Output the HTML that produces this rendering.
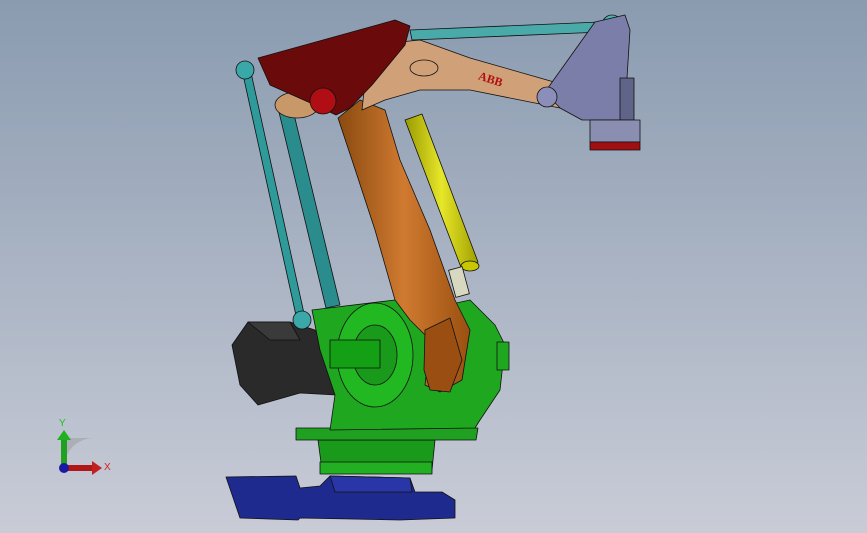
<!DOCTYPE html>
<html><head><meta charset="utf-8"><style>
html,body{margin:0;padding:0;width:867px;height:533px;overflow:hidden}
svg{display:block}
</style></head><body>
<svg width="867" height="533" viewBox="0 0 867 533" xmlns="http://www.w3.org/2000/svg">
<defs>
<linearGradient id="bg" x1="0" y1="0" x2="0" y2="1">
<stop offset="0" stop-color="#8a9bb0"/><stop offset="1" stop-color="#c9ccd7"/></linearGradient>
<linearGradient id="yel" x1="0" y1="0" x2="1" y2="0">
<stop offset="0" stop-color="#9a9a00"/><stop offset="0.5" stop-color="#e6e62a"/><stop offset="1" stop-color="#a0a000"/></linearGradient>
<linearGradient id="org" x1="0" y1="0" x2="1" y2="0">
<stop offset="0" stop-color="#8a4a10"/><stop offset="0.5" stop-color="#d07a30"/><stop offset="1" stop-color="#9a5010"/></linearGradient>
</defs>
<rect width="867" height="533" fill="url(#bg)"/>
<g stroke="#111" stroke-width="0.8" stroke-linejoin="round">
<!-- blue base -->
<polygon points="226,477 296,476 300,488 320,486 330,476 410,478 415,492 442,492 455,500 455,518 400,520 300,518 298,520 240,518" fill="#1e2a8e"/>
<polygon points="330,476 410,478 412,492 335,492" fill="#2a36a8"/>
<!-- green lower drum -->
<polygon points="318,440 435,440 432,470 322,470" fill="#1a9a1a"/>
<rect x="320" y="462" width="112" height="12" fill="#22b022"/>
<polygon points="296,428 478,428 476,440 296,440" fill="#20a020"/>
<!-- black motor -->
<polygon points="248,322 290,322 315,330 335,370 336,395 300,393 258,405 240,385 232,345" fill="#2a2a2a"/>
<polygon points="248,322 290,322 300,340 270,340" fill="#3a3a3a"/>
<!-- green main body -->
<polygon points="312,310 395,300 425,310 470,300 495,325 505,345 500,390 480,420 475,428 330,430 335,395 320,350" fill="#1fa81f"/>
<ellipse cx="375" cy="355" rx="38" ry="52" fill="#22b822"/>
<ellipse cx="375" cy="355" rx="22" ry="30" fill="#1a9a1a"/>
<rect x="330" y="340" width="50" height="28" fill="#14a014"/>
<rect x="497" y="342" width="12" height="28" fill="#1fa81f"/>
<!-- teal rods -->
<polygon points="242,70 250,68 305,318 297,320" fill="#2f9a9a"/>
<polygon points="278,108 292,106 340,305 326,308" fill="#2a8c8c"/>
<circle cx="302" cy="320" r="9" fill="#3aa8a8"/>
<circle cx="245" cy="70" r="9" fill="#3aa8a8"/>
<!-- orange arm -->
<polygon points="338,118 360,100 385,110 400,160 430,230 455,300 470,330 462,380 440,392 425,385 430,340 410,320 395,300 375,230 352,160" fill="url(#org)"/>
<polygon points="425,330 450,318 462,360 450,392 430,390 424,370" fill="#9a4e12"/>
<!-- yellow cylinder -->
<polygon points="405,120 422,114 478,262 462,270" fill="url(#yel)"/>
<ellipse cx="470" cy="266" rx="9" ry="5" fill="#c8c800"/>
<rect x="452" y="268" width="14" height="28" fill="#d8d8c0" transform="rotate(-15 459 282)"/>
<!-- tan upper arm -->
<polygon points="365,82 400,42 420,40 470,58 540,78 575,88 570,110 545,105 470,90 420,90 385,100 362,110" fill="#d0a078"/>
<ellipse cx="424" cy="68" rx="14" ry="8" fill="none"/>
<text x="478" y="83" font-family="Liberation Serif,serif" font-size="12" font-weight="bold" fill="#b01010" stroke="none" transform="rotate(18 490 80)">ABB</text>
<ellipse cx="297" cy="105" rx="22" ry="13" fill="#c89868"/>
<!-- teal top rod -->
<polygon points="410,30 600,22 602,32 412,40" fill="#4aaaaa"/>
<circle cx="612" cy="25" r="10" fill="#4ab0b0"/>
<!-- red triangle -->
<polygon points="258,58 395,20 410,26 405,45 372,85 350,108 336,115 315,105 270,85" fill="#6a0a0a"/>
<circle cx="323" cy="101" r="13" fill="#b00e14"/>
<!-- grey wrist -->
<polygon points="545,92 595,22 625,15 630,30 625,110 620,120 582,120 560,108" fill="#7a7ea8"/>
<circle cx="547" cy="97" r="10" fill="#8a8eb8"/>
<rect x="620" y="78" width="14" height="42" fill="#606488"/>
<rect x="590" y="120" width="50" height="22" fill="#8a8eb0"/>
<rect x="590" y="142" width="50" height="8" fill="#a01010"/>
</g>
<!-- axis triad -->
<path d="M64 468 A30 30 0 0 1 94 438 L64 438 Z" fill="#a0a0a8" opacity="0.6"/>
<rect x="61" y="438" width="6" height="30" fill="#20a020"/>
<polygon points="57,440 64,430 71,440" fill="#20b020"/>
<rect x="64" y="465" width="30" height="6" fill="#b01818"/>
<polygon points="92,461 102,468 92,475" fill="#c02020"/>
<circle cx="64" cy="468" r="5" fill="#1a1aa0"/>
<text x="59" y="426" font-family="Liberation Sans,sans-serif" font-size="10" fill="#20c020">Y</text>
<text x="104" y="470" font-family="Liberation Sans,sans-serif" font-size="10" fill="#d02020">X</text>
</svg>
</body></html>
